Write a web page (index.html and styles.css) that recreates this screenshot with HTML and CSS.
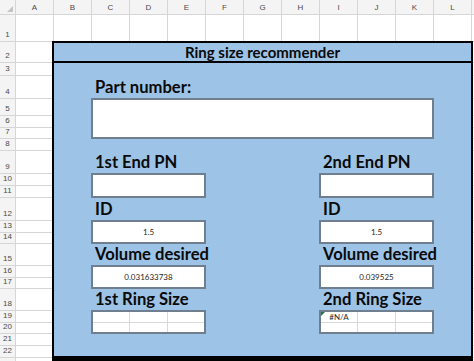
FILE: index.html
```html
<!DOCTYPE html>
<html lang="en">
<head>
<meta charset="utf-8">
<title>Ring size recommender</title>
<link rel="stylesheet" href="styles.css">
</head>
<body>
<div class="sheet">
  <div class="corner"><span class="corner-tri"></span></div>
  <div class="ch">A</div><div class="ch">B</div><div class="ch">C</div><div class="ch">D</div>
  <div class="ch">E</div><div class="ch">F</div><div class="ch">G</div><div class="ch">H</div>
  <div class="ch">I</div><div class="ch">J</div><div class="ch">K</div><div class="ch">L</div>
  <div class="ch"></div>

  <div class="rh">1</div>
  <div class="c"></div><div class="c"></div><div class="c"></div><div class="c"></div><div class="c"></div>
  <div class="c"></div><div class="c"></div><div class="c"></div><div class="c"></div><div class="c"></div>
  <div class="c"></div><div class="c"></div><div class="c"></div>

  <div class="form">
    <div class="title">Ring size recommender</div>

    <div class="lbl r4 left">Part number:</div>
    <div class="box part"></div>

    <div class="lbl r9 left">1st End PN</div>
    <div class="lbl r9 right">2nd End PN</div>
    <div class="box r10 left3"></div>
    <div class="box r10 right3"></div>

    <div class="lbl r12 left">ID</div>
    <div class="lbl r12 right">ID</div>
    <div class="box r13 left3 val">1.5</div>
    <div class="box r13 right3 val">1.5</div>

    <div class="lbl r15 left">Volume desired</div>
    <div class="lbl r15 right">Volume desired</div>
    <div class="box r16 left3 val">0.031633738</div>
    <div class="box r16 right3 val">0.039525</div>

    <div class="lbl r18 left">1st Ring Size</div>
    <div class="lbl r18 right">2nd Ring Size</div>
    <div class="box r19 left3 cells">
      <div class="ic"></div><div class="ic"></div><div class="ic"></div>
      <div class="ic"></div><div class="ic"></div><div class="ic"></div>
    </div>
    <div class="box r19 right3 cells">
      <div class="ic err"><span class="flag"></span>#N/A</div><div class="ic"></div><div class="ic"></div>
      <div class="ic"></div><div class="ic"></div><div class="ic"></div>
    </div>
  </div>

  <div class="rh">2</div><div class="c"></div><div class="c"></div>
  <div class="rh">3</div><div class="c"></div><div class="c"></div>
  <div class="rh">4</div><div class="c"></div><div class="c"></div>
  <div class="rh">5</div><div class="c"></div><div class="c"></div>
  <div class="rh">6</div><div class="c"></div><div class="c"></div>
  <div class="rh">7</div><div class="c"></div><div class="c"></div>
  <div class="rh">8</div><div class="c"></div><div class="c"></div>
  <div class="rh">9</div><div class="c"></div><div class="c"></div>
  <div class="rh">10</div><div class="c"></div><div class="c"></div>
  <div class="rh">11</div><div class="c"></div><div class="c"></div>
  <div class="rh">12</div><div class="c"></div><div class="c"></div>
  <div class="rh">13</div><div class="c"></div><div class="c"></div>
  <div class="rh">14</div><div class="c"></div><div class="c"></div>
  <div class="rh">15</div><div class="c"></div><div class="c"></div>
  <div class="rh">16</div><div class="c"></div><div class="c"></div>
  <div class="rh">17</div><div class="c"></div><div class="c"></div>
  <div class="rh">18</div><div class="c"></div><div class="c"></div>
  <div class="rh">19</div><div class="c"></div><div class="c"></div>
  <div class="rh">20</div><div class="c"></div><div class="c"></div>
  <div class="rh">21</div><div class="c"></div><div class="c"></div>
  <div class="rh">22</div><div class="c"></div><div class="c"></div>
  <div class="rh"></div><div class="c"></div><div class="c last"></div>
</div>
</body>
</html>
```

FILE: styles.css
```css
* { box-sizing: border-box; }

html, body {
  margin: 0;
  padding: 0;
  background: #ffffff;
}

.sheet {
  width: 474px;
  height: 361px;
  overflow: hidden;
  display: grid;
  grid-template-columns: 15px repeat(12, 37px) 1fr;
  grid-template-rows: 14px 26px 20px 12px 22px 16px 11px 10px 11px 22px 11px 11px 22px 11px 10px 21px 11px 10px 21px 11px 10px 11px 11px 20px;
  gap: 1px;
  background: #d6d6d6;
  font-family: "Liberation Sans", Arial, sans-serif;
}

.corner {
  background: #f4f4f4;
  position: relative;
}

.corner-tri {
  position: absolute;
  right: 2px;
  bottom: 2px;
  width: 0;
  height: 0;
  border-left: 6px solid transparent;
  border-bottom: 6px solid #c4c4c4;
}

.ch {
  background: #f4f4f4;
  color: #4a4a4a;
  font-size: 8px;
  display: flex;
  align-items: center;
  justify-content: center;
}

.rh {
  background: #f4f4f4;
  color: #4a4a4a;
  font-size: 8px;
  display: flex;
  align-items: flex-end;
  justify-content: center;
  padding-bottom: 1px;
  line-height: 10px;
}

.c { background: #ffffff; }
.c.last { grid-column: 14; }

/* the filled form block, B2:L22 */
.form {
  grid-column: 3 / 14;
  grid-row: 3 / 24;
  z-index: 1;
  margin: -1px -2px -4px -2px;
  padding: 1px 2px 0 2px;
  background: #9dc3e6;
  box-shadow: inset 0 0 0 2px #000000, inset 0 -5px 0 #000000;
  display: grid;
  grid-template-columns: repeat(11, 37px);
  grid-template-rows: 20px 12px 22px 16px 11px 10px 11px 22px 11px 11px 22px 11px 10px 21px 11px 10px 21px 11px 10px 11px 11px;
  gap: 1px;
  font-family: Lato, "Open Sans", sans-serif;
  color: #0a0a0a;
}

.title {
  grid-column: 1 / -1;
  grid-row: 1;
  margin-bottom: -1px;
  border-bottom: 2px solid #000000;
  display: flex;
  align-items: center;
  justify-content: center;
  font-weight: 700;
  font-size: 15px;
  line-height: 15px;
  padding-top: 2px;
}

.lbl {
  font-weight: 700;
  font-size: 16.6px;
  line-height: 16px;
  white-space: nowrap;
  align-self: end;
  padding-left: 3px;
  margin-bottom: 3px;
}

.lbl.left { grid-column: 2 / 6; }
.lbl.right { grid-column: 8 / 12; }
.r4 { grid-row: 3; }
.r9 { grid-row: 8; }
.r12 { grid-row: 11; }
.r15 { grid-row: 14; }
.r18 { grid-row: 17; }

.box {
  margin: -1px;
  background: #ffffff;
  border: 2px solid #6f7f90;
}

.part { grid-column: 2 / 11; grid-row: 4 / 7; }
.left3 { grid-column: 2 / 5; }
.right3 { grid-column: 8 / 11; }
.r10 { grid-row: 9 / 11; }
.r13 { grid-row: 12 / 14; }
.r16 { grid-row: 15 / 17; }
.r19 { grid-row: 18 / 20; }

.val {
  display: flex;
  align-items: center;
  justify-content: center;
  font-size: 8px;
  color: #262626;
}

.cells {
  display: grid;
  grid-template-columns: 36px 37px 1fr;
  grid-template-rows: 10px 1fr;
  gap: 1px;
  background: #d9d9d9;
}

.ic {
  background: #ffffff;
  position: relative;
}

.err {
  display: flex;
  align-items: center;
  justify-content: center;
  font-size: 8px;
  line-height: 8px;
  color: #262626;
}

.flag {
  position: absolute;
  left: 0;
  top: 0;
  width: 0;
  height: 0;
  border-top: 4px solid #217346;
  border-right: 4px solid transparent;
}
```
